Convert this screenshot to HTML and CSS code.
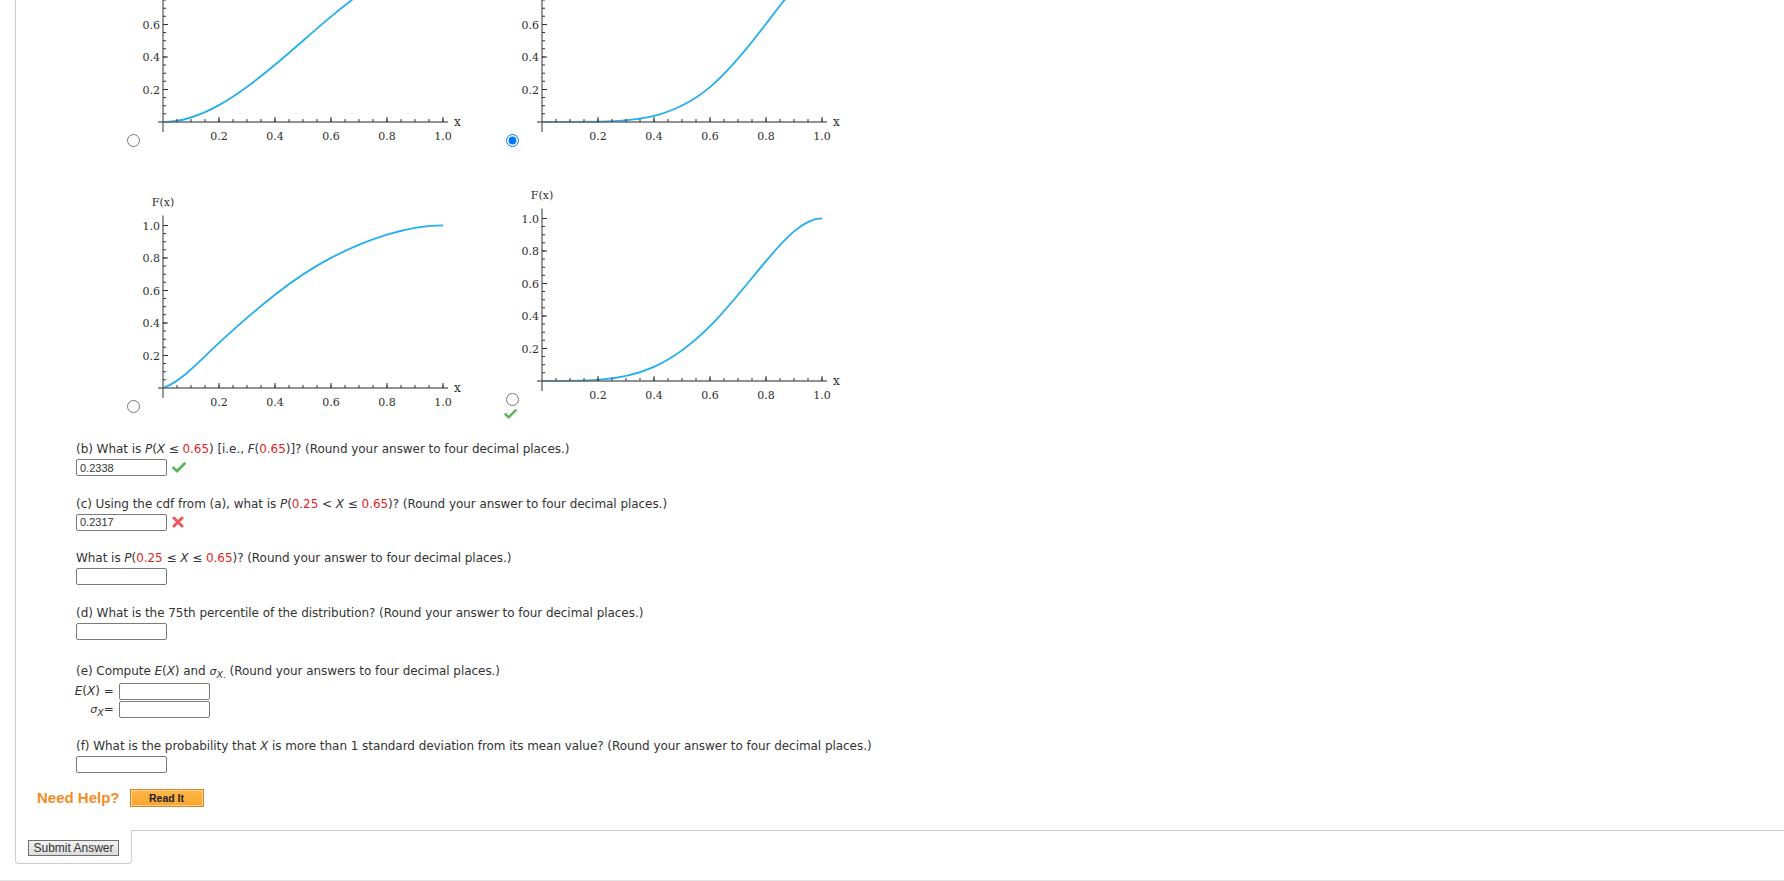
FILE: index.html
```html
<!DOCTYPE html>
<html lang="en">
<head>
<meta charset="utf-8">
<title>CDF question</title>
<link rel="stylesheet" href="styles.css">
</head>
<body>
<svg class="defs" width="0" height="0" aria-hidden="true">
  <defs>
    <g id="axes" fill="none">
      <path d="M18 196H308" stroke="#6e6e6e" stroke-width="1.5"/>
      <path d="M23 23.5V206" stroke="#555" stroke-width="1.2"/>
      <g stroke="#333">
        <path d="M36.5 194.5H303.5" stroke-width="3" stroke-dasharray="1 13"/>
        <path d="M78.5 193.5H303.5" stroke-width="5" stroke-dasharray="1 55"/>
        <path d="M24.5 188.37V32.5" stroke-width="3" stroke-dasharray="1 7.13"/>
        <path d="M25.5 164.02V32.5" stroke-width="5" stroke-dasharray="1 31.52"/>
      </g>
      <g fill="#2e2e2e" stroke="none" font-family="DejaVu Serif, serif" font-size="11">
        <text x="23" y="14" text-anchor="middle">F(x)</text>
        <g text-anchor="end">
          <text x="20" y="37.5">1.0</text>
          <text x="20" y="70">0.8</text>
          <text x="20" y="102.5">0.6</text>
          <text x="20" y="135">0.4</text>
          <text x="20" y="167.5">0.2</text>
        </g>
        <g text-anchor="middle">
          <text x="79" y="213.5">0.2</text>
          <text x="135" y="213.5">0.4</text>
          <text x="191" y="213.5">0.6</text>
          <text x="247" y="213.5">0.8</text>
          <text x="303" y="213.5">1.0</text>
        </g>
        <text x="314" y="200" font-size="12">x</text>
      </g>
    </g>
  </defs>
</svg>

<div class="page">
  <div class="question">
    <div class="parts">
      <div class="plots">
        <div class="opt">
          <input class="radio" type="radio" name="cdf">
          <svg class="plot" width="340" height="222" viewBox="0 0 340 222">
            <g transform="translate(23 196) scale(280 -162.6)">
              <path class="curve" vector-effect="non-scaling-stroke" d="M0 0C.0667 0 .1333 .04 .2 .104C.2667 .168 .3333 .256 .4 .352C.4667 .448 .5333 .552 .6 .648C.6667 .744 .7333 .832 .8 .896C.8667 .96 .9333 1 1 1"/>
            </g>
            <use href="#axes"/>
          </svg>
        </div>
        <div class="opt">
          <input class="radio" type="radio" name="cdf" checked>
          <svg class="plot" width="340" height="222" viewBox="0 0 340 222">
            <g transform="translate(23 196) scale(280 -162.6)">
              <path class="curve" vector-effect="non-scaling-stroke" d="M0 0C.0667 0 .1333 0 .2 .0015C.2667 .0038 .3333 .0094 .4 .0377C.4667 .066 .5333 .1192 .6 .2146C.6667 .31 .7333 .4522 .8 .6029C.8667 .7537 .9333 .92 1 .92"/>
            </g>
            <use href="#axes"/>
          </svg>
        </div>
        <div class="opt">
          <input class="radio" type="radio" name="cdf">
          <svg class="plot" width="340" height="222" viewBox="0 0 340 222">
            <g transform="translate(23 196) scale(280 -162.6)">
              <path class="curve" vector-effect="non-scaling-stroke" d="M0 0C.0667 .04 .1333 .1713 .2 .277C.2667 .3827 .3333 .484 .4 .574C.4667 .664 .5333 .74 .6 .8C.6667 .86 .7333 .908 .8 .943C.8667 .978 .9333 1 1 1"/>
            </g>
            <use href="#axes"/>
          </svg>
        </div>
        <div class="opt-col">
          <div class="opt">
            <input class="radio" type="radio" name="cdf">
            <svg class="plot" width="340" height="222" viewBox="0 0 340 222">
              <g transform="translate(23 196) scale(280 -162.6)">
                <path class="curve" vector-effect="non-scaling-stroke" d="M0 0C.0667 0 .1333 0 .2 .0067C.2667 .0153 .3333 .0358 .4 .087C.4667 .1382 .5333 .2218 .6 .337C.6667 .4522 .7333 .6008 .8 .7373C.8667 .8738 .9333 1 1 1"/>
              </g>
              <use href="#axes"/>
            </svg>
          </div>
          <div class="under">
            <svg class="icon-check" width="13" height="10" viewBox="0 0 14 11"><path d="M1.5 5.8L5 9.2L12.6 1.6" fill="none" stroke="#5db55d" stroke-width="2.8" stroke-linecap="round" stroke-linejoin="round"/></svg>
          </div>
        </div>
      </div>

      <div class="q">
        <p class="qt">(b) What is <i>P</i>(<i>X</i> ≤ <span class="red">0.65</span>) [i.e., <i>F</i>(<span class="red">0.65</span>)]? (Round your answer to four decimal places.)</p>
        <div class="ans">
          <input class="box" type="text" value="0.2338">
          <svg class="icon-check" width="14" height="11" viewBox="0 0 14 11"><path d="M1.5 5.8L5 9.2L12.6 1.6" fill="none" stroke="#5db55d" stroke-width="2.8" stroke-linecap="round" stroke-linejoin="round"/></svg>
        </div>
      </div>

      <div class="q">
        <p class="qt">(c) Using the cdf from (a), what is <i>P</i>(<span class="red">0.25</span> &lt; <i>X</i> ≤ <span class="red">0.65</span>)? (Round your answer to four decimal places.)</p>
        <div class="ans">
          <input class="box" type="text" value="0.2317">
          <svg class="icon-x" width="12" height="12" viewBox="0 0 12 12"><path d="M2 2L10 10M10 2L2 10" fill="none" stroke="#e8585a" stroke-width="3" stroke-linecap="round"/></svg>
        </div>
      </div>

      <div class="q">
        <p class="qt">What is <i>P</i>(<span class="red">0.25</span> ≤ <i>X</i> ≤ <span class="red">0.65</span>)? (Round your answer to four decimal places.)</p>
        <div class="ans">
          <input class="box" type="text" value="">
        </div>
      </div>

      <div class="q">
        <p class="qt">(d) What is the 75th percentile of the distribution? (Round your answer to four decimal places.)</p>
        <div class="ans">
          <input class="box" type="text" value="">
        </div>
      </div>

      <div class="q">
        <p class="qt qt-e">(e) Compute <i>E</i>(<i>X</i>) and <i class="sig">σ</i><sub class="sb"><i>X</i>.</sub> (Round your answers to four decimal places.)</p>
        <div class="eqs">
          <div class="eq-row">
            <span class="eq-label"><span><i>E</i>(<i>X</i>) =</span></span>
            <input class="box" type="text" value="">
          </div>
          <div class="eq-row">
            <span class="eq-label"><span><i class="sig">σ</i><sub class="sb"><i>X</i></sub>=</span></span>
            <input class="box" type="text" value="">
          </div>
        </div>
      </div>

      <div class="q q-last">
        <p class="qt">(f) What is the probability that <i>X</i> is more than 1 standard deviation from its mean value? (Round your answer to four decimal places.)</p>
        <div class="ans">
          <input class="box" type="text" value="">
        </div>
      </div>
    </div>

    <div class="help">
      <span class="help-label">Need Help?</span>
      <button class="readit" type="button">Read It</button>
    </div>
  </div>

  <div class="footer">
    <div class="tab">
      <button class="submit" type="button">Submit Answer</button>
    </div>
    <div class="fill"></div>
  </div>
</div>
<div class="bottom-rule"></div>
</body>
</html>
```

FILE: styles.css
```css
html, body {
  margin: 0;
  padding: 0;
  background: #fff;
}

body {
  font-family: "DejaVu Sans", Verdana, sans-serif;
  font-size: 12px;
  color: #333;
  overflow: hidden;
}

.defs {
  display: block;
  width: 0;
  height: 0;
  overflow: hidden;
}

.page {
  padding-left: 15px;
}

.question {
  border-left: 1px solid #cdcdcd;
  margin-top: -74px;
  padding-left: 21px;
  padding-bottom: 23.3px;
}

.parts {
  padding-left: 39px;
}

/* plots */
.plots {
  display: grid;
  grid-template-columns: 378.5px 378.5px;
  row-gap: 36.7px;
  align-items: center;
  margin-left: 51px;
  margin-bottom: 19.4px;
}

.opt {
  display: flex;
  align-items: flex-end;
}

.opt-col {
  display: flex;
  flex-direction: column;
}

.radio {
  width: 13px;
  height: 13px;
  margin: 0 0 1px 0;
  flex: none;
}

.plot {
  display: block;
  flex: none;
  overflow: hidden;
}

.curve {
  fill: none;
  stroke: #22aef0;
  stroke-width: 1.8px;
}

.under {
  height: 15.2px;
  display: flex;
  align-items: center;
  margin-left: -2px;
}

.icon-check, .icon-x {
  display: block;
  flex: none;
}

/* questions */
.q {
  margin-bottom: 19.6px;
}

.q-last {
  margin-bottom: 0;
}

.qt {
  margin: 0;
  line-height: 16px;
  letter-spacing: -0.05px;
  white-space: nowrap;
}

.qt-e {
  padding-top: 3px;
}

.red {
  color: #e21f1f;
}

.sig {
  font-size: 11px;
}

.sb {
  font-size: 9.5px;
  line-height: 0;
  vertical-align: -3px;
}

.ans {
  display: flex;
  align-items: center;
  gap: 4.5px;
  height: 17px;
  margin-top: 2px;
}

.box {
  width: 91px;
  height: 17px;
  box-sizing: border-box;
  border: 1px solid #7a7a7a;
  border-radius: 2px;
  padding: 0 3px;
  margin: 0;
  font-family: "Liberation Sans", Arial, sans-serif;
  font-size: 11px;
  color: #333;
  background: #fff;
  outline: none;
}

.eqs {
  margin-top: 3.8px;
}

.eq-row {
  display: flex;
  align-items: center;
  height: 17px;
}

.eq-row + .eq-row {
  margin-top: 0.6px;
}

.eq-label {
  display: flex;
  justify-content: flex-end;
  flex: none;
  width: 43.3px;
  box-sizing: border-box;
  padding-right: 5.6px;
  white-space: nowrap;
  line-height: 17px;
}

/* help */
.help {
  display: flex;
  align-items: center;
  height: 18.4px;
  margin-top: 16px;
}

.help-label {
  font-family: "Liberation Sans", Arial, sans-serif;
  font-weight: bold;
  font-size: 15px;
  color: #f68b1f;
}

.readit {
  margin: 0 0 0 10px;
  width: 74px;
  height: 18.4px;
  box-sizing: border-box;
  padding: 0;
  border: 1px solid #d98227;
  background: linear-gradient(#fdb849, #f9a42c);
  box-shadow: inset 0 0 0 1px #fdd48e;
  font-family: "Liberation Sans", Arial, sans-serif;
  font-weight: bold;
  font-size: 10.5px;
  color: #222;
}

/* footer */
.footer {
  display: flex;
}

.tab {
  border-left: 1px solid #cdcdcd;
  border-right: 1px solid #cdcdcd;
  border-bottom: 1px solid #cdcdcd;
  border-radius: 0 0 4px 4px;
  padding: 9.3px 12px 6.6px 12.3px;
}

.submit {
  display: block;
  width: 90.4px;
  height: 16.4px;
  box-sizing: border-box;
  margin: 0;
  padding: 0;
  border: 1px solid #6f6f6f;
  background: linear-gradient(#f2f2f2, #dcdcdc);
  font-family: "Liberation Sans", Arial, sans-serif;
  font-size: 12px;
  color: #333;
}

.fill {
  flex: 1;
  border-top: 1px solid #cdcdcd;
}

.bottom-rule {
  margin-top: 16px;
  border-top: 2px solid #e3e3e3;
}
```
